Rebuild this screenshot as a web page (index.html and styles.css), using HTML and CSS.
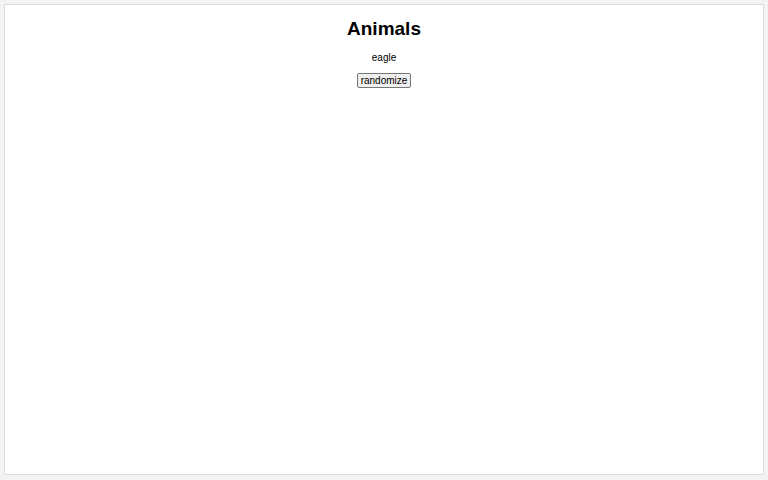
FILE: index.html
```html
<!DOCTYPE html>
<html>
<head>
<meta charset="utf-8">
<link rel="stylesheet" href="styles.css">
</head>
<body>
<main class="card">
  <h1 class="title">Animals</h1>
  <p class="animal">eagle</p>
  <button class="btn" type="button">randomize</button>
</main>
</body>
</html>
```
FILE: styles.css
```css
html, body {
  margin: 0;
  height: 100%;
}
body {
  background: #f3f3f3;
  padding: 4px 4px 5px 4px;
  box-sizing: border-box;
  font-family: "Liberation Sans", Arial, sans-serif;
}
.card {
  height: 100%;
  box-sizing: border-box;
  background: #fff;
  border: 1px solid #dcdcdc;
  display: flex;
  flex-direction: column;
  align-items: center;
  padding-top: 12px;
}
.title {
  margin: 0;
  font-size: 19px;
  font-weight: bold;
  line-height: 24px;
  color: #000;
}
.animal {
  margin: 11px 0 0;
  font-size: 10px;
  line-height: 12px;
  color: #000;
}
.btn {
  margin-top: 9px;
  font-family: "Liberation Sans", Arial, sans-serif;
  font-size: 10px;
  padding: 1px 3px;
  background: #efefef;
  border: 1px solid #767676;
  border-radius: 2px;
  color: #000;
}
```
